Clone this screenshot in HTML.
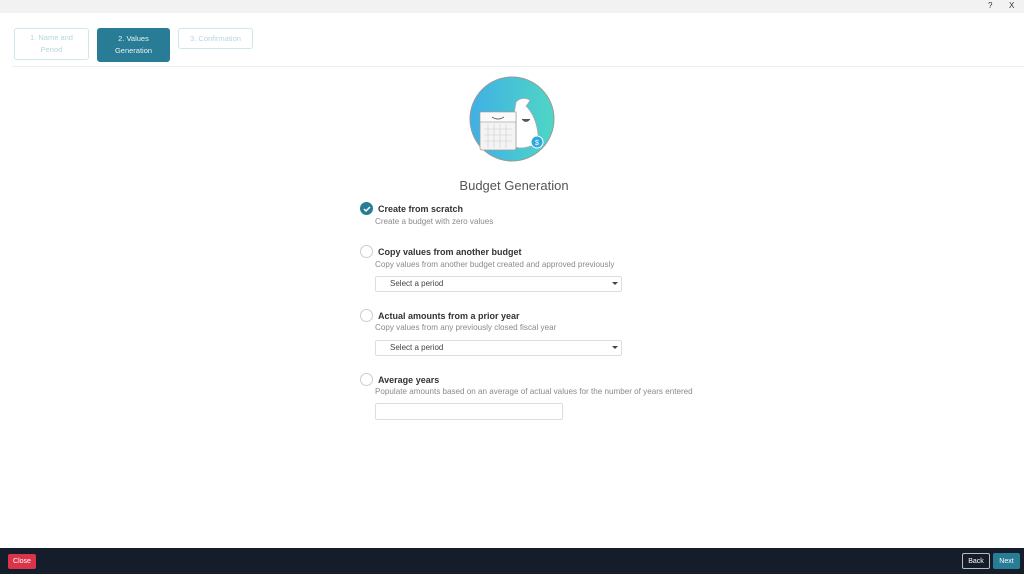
<!DOCTYPE html>
<html><head><style>
body{margin:0;width:1024px;height:574px;position:relative;background:#fff;font-family:"Liberation Sans",sans-serif;overflow:hidden}
.a{position:absolute}
.top{left:0;top:0;width:1024px;height:13px;background:#f2f2f2;font-size:8px;color:#333}
.step{border:1px solid #cfe6ec;border-radius:3px;color:#b7d6df;font-size:7.5px;text-align:center;line-height:12px;box-sizing:border-box;display:flex;align-items:center;justify-content:center}
.lbl{font-size:9px;font-weight:bold;color:#333}
.sub{font-size:8.1px;color:#8a8a8a}
.rad{width:13px;height:13px;border:1px solid #ccc;border-radius:50%;box-sizing:border-box;background:#fff}
.sel{border:1px solid #ddd;border-radius:2px;box-sizing:border-box;font-size:8px;color:#444;padding-left:14px;line-height:14px}
.sel:after{content:"";position:absolute;right:3px;top:5px;border:3px solid transparent;border-top:3px solid #444}
.btn{color:#fff;font-size:7px;text-align:center;box-sizing:border-box;border-radius:2px;display:flex;align-items:center;justify-content:center}
</style></head><body>
<div class="a top"><span class="a" style="left:988px;top:1px">?</span><span class="a" style="left:1009px;top:1px">X</span></div>
<div class="a step" style="left:14px;top:28px;width:75px;height:32px">1. Name and<br>Period</div>
<div class="a step" style="left:97px;top:28px;width:73px;height:34px;background:#287c95;border-color:#287c95;color:#e6f2f5">2. Values<br>Generation</div>
<div class="a step" style="left:178px;top:28px;width:75px;height:21px">3. Confirmation</div>
<div class="a" style="left:12px;top:66px;width:1012px;height:1px;background:#eee"></div>
<svg class="a" style="left:466px;top:74px" width="92" height="90" viewBox="0 0 92 90">
<defs><linearGradient id="g" x1="0" x2="1"><stop offset="0" stop-color="#3fb0e6"/><stop offset="1" stop-color="#4fd6c5"/></linearGradient></defs>
<circle cx="46" cy="45" r="42" fill="url(#g)" stroke="#999" stroke-width="1"/>
<path d="M50 28 q6-6 14-2 q-2 4-4 6 q10 10 12 28 q0 14-18 14 q-8 0-10-10z" fill="#fff" stroke="#aaa" stroke-width="0.8"/>
<circle cx="71" cy="68" r="6" fill="#2ea7e0" stroke="#fff" stroke-width="1"/>
<text x="69" y="71" font-size="7" fill="#fff" font-family="Liberation Sans">$</text>
<rect x="14" y="38" width="36" height="38" rx="2" fill="#f4f4f4" stroke="#999" stroke-width="0.8"/>
<rect x="14" y="38" width="36" height="10" fill="#fafafa" stroke="#999" stroke-width="0.6"/>
<path d="M18 55h28M18 61h28M18 67h28M22 50v24M28 50v24M34 50v24M40 50v24" stroke="#ccc" stroke-width="0.6"/>
<path d="M26 43q6 4 12 0" stroke="#555" fill="none" stroke-width="0.8"/>
<path d="M56 45q4 5 8 0" stroke="#555" fill="#555" stroke-width="0.8"/>
</svg>
<div class="a" style="left:0;width:1028px;top:178px;text-align:center;font-size:13px;color:#555">Budget Generation</div>

<div class="a rad" style="left:360px;top:202px;background:#287c95;border-color:#287c95"><svg width="11" height="11" style="position:absolute;left:0;top:0"><path d="M3 6l2 2 4-4" stroke="#fff" stroke-width="1.5" fill="none"/></svg></div>
<div class="a lbl" style="left:378px;top:204px">Create from scratch</div>
<div class="a sub" style="left:375px;top:217px">Create a budget with zero values</div>

<div class="a rad" style="left:360px;top:245px"></div>
<div class="a lbl" style="left:378px;top:247px">Copy values from another budget</div>
<div class="a sub" style="left:375px;top:260px">Copy values from another budget created and approved previously</div>
<div class="a sel" style="left:375px;top:276px;width:247px;height:16px">Select a period</div>

<div class="a rad" style="left:360px;top:309px"></div>
<div class="a lbl" style="left:378px;top:311px">Actual amounts from a prior year</div>
<div class="a sub" style="left:375px;top:323px">Copy values from any previously closed fiscal year</div>
<div class="a sel" style="left:375px;top:340px;width:247px;height:16px">Select a period</div>

<div class="a rad" style="left:360px;top:373px"></div>
<div class="a lbl" style="left:378px;top:375px">Average years</div>
<div class="a sub" style="left:375px;top:387px">Populate amounts based on an average of actual values for the number of years entered</div>
<div class="a" style="left:375px;top:403px;width:188px;height:17px;border:1px solid #ddd;box-sizing:border-box;border-radius:2px"></div>

<div class="a" style="left:0;top:548px;width:1024px;height:26px;background:#151d2b"></div>
<div class="a btn" style="left:8px;top:554px;width:28px;height:15px;background:#d9344a">Close</div>
<div class="a btn" style="left:962px;top:553px;width:28px;height:16px;border:1px solid #bbb">Back</div>
<div class="a btn" style="left:993px;top:553px;width:27px;height:16px;background:#287c95">Next</div>
</body></html>
